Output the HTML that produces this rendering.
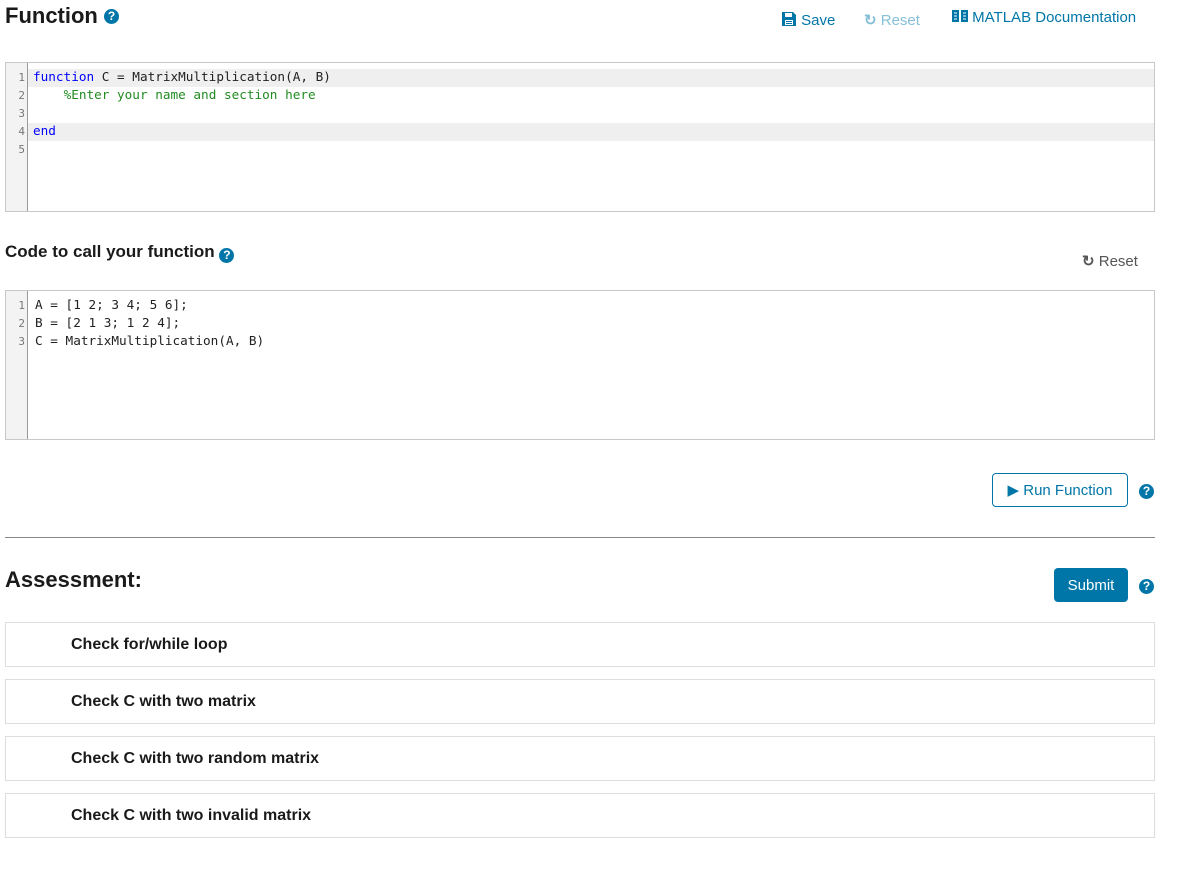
<!DOCTYPE html>
<html><head><meta charset="utf-8"><style>
body{margin:0;background:#fff;font-family:"Liberation Sans",Arial,sans-serif;color:#1a1a1a;width:1184px;height:872px;overflow:hidden;position:relative}
.abs{position:absolute}
.q{display:inline-block;width:15px;height:15px;border-radius:50%;background:#0076a8;color:#fff;font-size:12px;font-weight:bold;text-align:center;line-height:15px}
.ed{position:absolute;left:5px;width:1148px;border:1px solid #c8c8c8;background:#fff}
.gut{position:absolute;left:0;top:0;bottom:0;width:21px;background:#f3f3f3;border-right:1px solid #999}
.ln{position:absolute;left:0;width:19px;text-align:right;font:11px "DejaVu Sans Mono",monospace;color:#777}
.cl{position:absolute;left:27px;font:12.7px "DejaVu Sans Mono","Liberation Mono",monospace;color:#222;white-space:pre;line-height:18px}
.hl{position:absolute;left:22px;right:0;height:18px;background:#efefef}
.kw{color:#0000ff}.cm{color:#228b22}
.chk{position:absolute;left:5px;width:1148px;height:43px;border:1px solid #ddd;font-weight:bold;font-size:16px}
.chk span{position:absolute;left:65px;top:13px}
</style></head><body>
<div class="abs" style="left:5px;top:3px;font-size:22px;font-weight:bold">Function <span class="q" style="vertical-align:3px">?</span></div>
<div class="abs" style="left:781px;top:11px;font-size:15px;color:#0076a8"><svg width="16" height="16" viewBox="0 0 16 16" style="vertical-align:-2px"><path d="M1 1h11l3 3v11H1z" fill="#0076a8"/><rect x="4" y="2" width="7" height="4" fill="#fff"/><rect x="4" y="9" width="8" height="5" fill="#fff"/><rect x="5" y="10" width="6" height="1" fill="#0076a8"/><rect x="5" y="12" width="6" height="1" fill="#0076a8"/></svg> Save</div>
<div class="abs" style="left:864px;top:11px;font-size:15px;color:#86c0d8"><span style="font-weight:bold">&#x21bb;</span> Reset</div>
<div class="abs" style="left:952px;top:9px;font-size:15px;color:#0076a8"><svg width="16" height="14" viewBox="0 0 16 14" style="vertical-align:-1px"><rect x="0" y="1" width="7" height="12" fill="#0076a8"/><rect x="9" y="1" width="7" height="12" fill="#0076a8"/><path d="M2 4h3M2 7h3M2 10h3M11 4h3M11 7h3M11 10h3" stroke="#fff"/></svg> MATLAB Documentation</div>

<div class="ed" style="top:62px;height:148px">
<div class="gut"></div>
<div class="hl" style="top:6px"></div><div class="hl" style="top:60px"></div>
<div class="ln" style="top:8px">1</div><div class="ln" style="top:26px">2</div><div class="ln" style="top:44px">3</div><div class="ln" style="top:62px">4</div><div class="ln" style="top:80px">5</div>
<div class="cl" style="top:5px"><span class="kw">function</span> C = MatrixMultiplication(A, B)
    <span class="cm">%Enter your name and section here</span>

<span class="kw">end</span></div>
</div>

<div class="abs" style="left:5px;top:242px;font-size:17px;font-weight:bold">Code to call your function <span class="q" style="vertical-align:-2px">?</span></div>
<div class="abs" style="left:1082px;top:252px;font-size:15px;color:#555"><span style="font-weight:bold">&#x21bb;</span> Reset</div>

<div class="ed" style="top:290px;height:148px">
<div class="gut"></div>
<div class="ln" style="top:8px">1</div><div class="ln" style="top:26px">2</div><div class="ln" style="top:44px">3</div>
<div class="cl" style="top:5px;left:29px">A = [1 2; 3 4; 5 6];
B = [2 1 3; 1 2 4];
C = MatrixMultiplication(A, B)</div>
</div>

<div class="abs" style="left:992px;top:473px;width:134px;height:32px;border:1px solid #0076a8;border-radius:4px;color:#0076a8;font-size:15px;line-height:34px;text-align:center">&#9654; Run Function</div>
<div class="abs" style="left:1139px;top:482px"><span class="q">?</span></div>
<div class="abs" style="left:5px;top:537px;width:1150px;height:1px;background:#888"></div>
<div class="abs" style="left:5px;top:567px;font-size:22px;font-weight:bold">Assessment:</div>
<div class="abs" style="left:1054px;top:568px;width:74px;height:34px;background:#0076a8;border-radius:4px;color:#fff;font-size:15px;line-height:36px;text-align:center">Submit</div>
<div class="abs" style="left:1139px;top:577px"><span class="q">?</span></div>

<div class="chk" style="top:622px"><span>Check for/while loop</span></div>
<div class="chk" style="top:679px"><span>Check C with two matrix</span></div>
<div class="chk" style="top:736px"><span>Check C with two random matrix</span></div>
<div class="chk" style="top:793px"><span>Check C with two invalid matrix</span></div>
</body></html>
